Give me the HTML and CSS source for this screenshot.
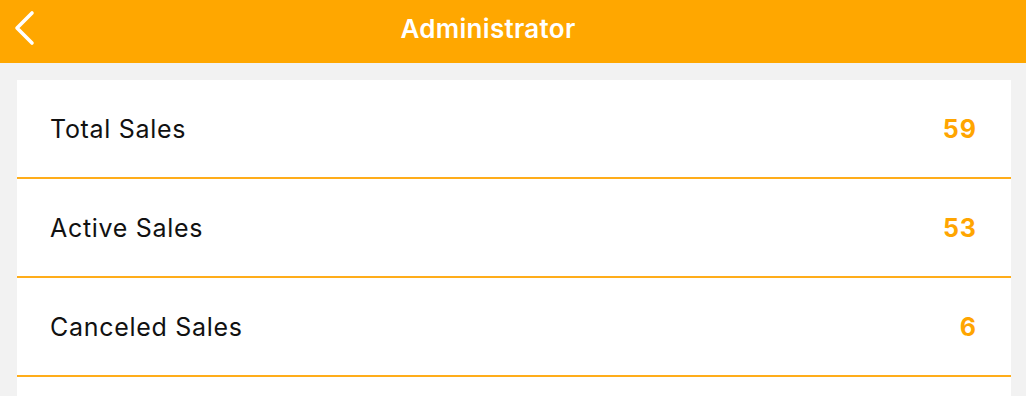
FILE: index.html
```html
<!DOCTYPE html>
<html>
<head>
<meta charset="utf-8">
<link rel="stylesheet" href="styles.css">
</head>
<body>
<header class="nav">
  <button class="back" aria-label="Back">
    <svg width="24" height="36" viewBox="0 0 24 36"><path d="M20 3 L5 18 L20 33" fill="none" stroke="#fff" stroke-width="3.6" stroke-linecap="round" stroke-linejoin="round"/></svg>
  </button>
  <h1 class="title">Administrator</h1>
</header>
<main class="content">
  <div class="card">
    <div class="row"><span class="label">Total Sales</span><span class="value">59</span></div>
    <div class="row"><span class="label">Active Sales</span><span class="value">53</span></div>
    <div class="row"><span class="label">Canceled Sales</span><span class="value">6</span></div>
  </div>
</main>
</body>
</html>
```
FILE: styles.css
```css
* { box-sizing: border-box; }
html, body { margin: 0; padding: 0; }
body {
  width: 1026px;
  height: 396px;
  overflow: hidden;
  background: #f2f2f2;
  font-family: Inter, "Noto Sans", "Liberation Sans", sans-serif;
  display: flex;
  flex-direction: column;
}
.nav {
  flex: 0 0 63px;
  background: #ffa700;
  display: flex;
  align-items: flex-start;
  position: relative;
}
.back {
  background: none;
  border: 0;
  padding: 0;
  margin: 10px 0 0 12px;
  width: 24px;
  height: 36px;
  display: flex;
  cursor: pointer;
}
.title {
  position: absolute;
  left: 0;
  right: 50px;
  top: 0;
  height: 56px;
  margin: 0;
  display: flex;
  align-items: center;
  justify-content: center;
  color: #fff;
  font-size: 26px;
  font-weight: 600;
  letter-spacing: 0.3px;
  pointer-events: none;
}
.content {
  flex: 1;
  min-height: 0;
  padding: 17px 15px 0 17px;
  display: flex;
}
.card {
  flex: 1;
  background: #fff;
}
.row {
  height: 99px;
  border-bottom: 2px solid #ffad1a;
  display: flex;
  align-items: center;
  justify-content: space-between;
  padding: 0 34px 0 33px;
}
.label {
  font-size: 25px;
  font-weight: 400;
  color: #111;
  letter-spacing: 0.7px;
}
.value {
  font-size: 25px;
  font-weight: 700;
  color: #ffa500;
  letter-spacing: 1px;
}
```
